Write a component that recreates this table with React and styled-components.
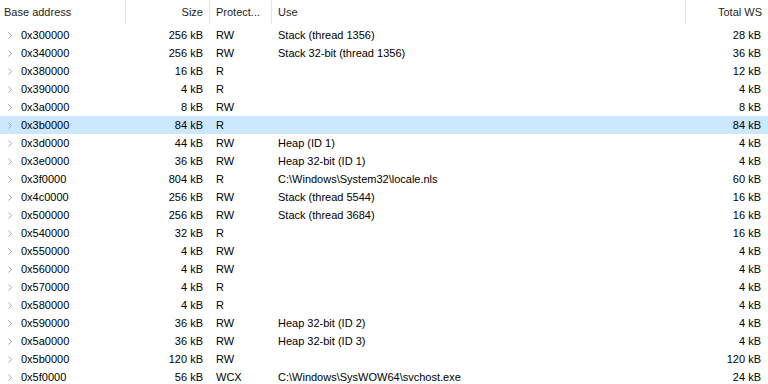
import React from 'react';
import styled, { createGlobalStyle } from 'styled-components';

const GlobalStyle = createGlobalStyle`
  html, body {
    margin: 0;
    padding: 0;
    background: #ffffff;
  }
  body {
    font-family: "Liberation Sans", Arial, sans-serif;
    font-size: 11px;
    color: #000000;
  }
`;

const COLUMNS = '126px 84px 62px 414px 82px';

const Table = styled.div`
  width: 768px;
  height: 384px;
  overflow: hidden;
  background: #ffffff;
`;

const HeaderRow = styled.div`
  display: grid;
  grid-template-columns: ${COLUMNS};
  height: 26px;
  align-items: start;
`;

const HeaderCell = styled.div`
  display: flex;
  align-items: center;
  justify-content: ${props => (props.right ? 'flex-end' : 'flex-start')};
  height: 24px;
  padding: ${props => (props.right ? '0 6px 0 0' : '0 0 0 6px')};
  padding-left: ${props => (props.first ? '4px' : undefined)};
  border-right: ${props => (props.last ? 'none' : '1px solid #e5e5e5')};
  color: #1e1e1e;
  white-space: nowrap;
  overflow: hidden;
`;

const Row = styled.div`
  display: grid;
  grid-template-columns: ${COLUMNS};
  height: 18px;
  align-items: center;
  background: ${props => (props.selected ? '#cce8ff' : 'transparent')};
`;

const Cell = styled.div`
  display: flex;
  align-items: center;
  justify-content: ${props => (props.right ? 'flex-end' : 'flex-start')};
  padding: ${props => (props.right ? '0 7px 0 0' : '0 0 0 6px')};
  white-space: nowrap;
  overflow: hidden;
`;

const AddressCell = styled(Cell)`
  padding-left: 8px;
  gap: 9px;
`;

const Chevron = () => (
  <svg width="4" height="7" viewBox="0 0 4 7">
    <path d="M0.5 0.5 L3.5 3.5 L0.5 6.5" fill="none" stroke="#a6a6a6" strokeWidth="1" />
  </svg>
);

const rows = [
  ['0x300000', '256 kB', 'RW', 'Stack (thread 1356)', '28 kB'],
  ['0x340000', '256 kB', 'RW', 'Stack 32-bit (thread 1356)', '36 kB'],
  ['0x380000', '16 kB', 'R', '', '12 kB'],
  ['0x390000', '4 kB', 'R', '', '4 kB'],
  ['0x3a0000', '8 kB', 'RW', '', '8 kB'],
  ['0x3b0000', '84 kB', 'R', '', '84 kB'],
  ['0x3d0000', '44 kB', 'RW', 'Heap (ID 1)', '4 kB'],
  ['0x3e0000', '36 kB', 'RW', 'Heap 32-bit (ID 1)', '4 kB'],
  ['0x3f0000', '804 kB', 'R', 'C:\\Windows\\System32\\locale.nls', '60 kB'],
  ['0x4c0000', '256 kB', 'RW', 'Stack (thread 5544)', '16 kB'],
  ['0x500000', '256 kB', 'RW', 'Stack (thread 3684)', '16 kB'],
  ['0x540000', '32 kB', 'R', '', '16 kB'],
  ['0x550000', '4 kB', 'RW', '', '4 kB'],
  ['0x560000', '4 kB', 'RW', '', '4 kB'],
  ['0x570000', '4 kB', 'R', '', '4 kB'],
  ['0x580000', '4 kB', 'R', '', '4 kB'],
  ['0x590000', '36 kB', 'RW', 'Heap 32-bit (ID 2)', '4 kB'],
  ['0x5a0000', '36 kB', 'RW', 'Heap 32-bit (ID 3)', '4 kB'],
  ['0x5b0000', '120 kB', 'RW', '', '120 kB'],
  ['0x5f0000', '56 kB', 'WCX', 'C:\\Windows\\SysWOW64\\svchost.exe', '24 kB'],
];

const App = () => (
  <Table>
    <GlobalStyle />
    <HeaderRow>
      <HeaderCell first>Base address</HeaderCell>
      <HeaderCell right>Size</HeaderCell>
      <HeaderCell>Protect...</HeaderCell>
      <HeaderCell>Use</HeaderCell>
      <HeaderCell right last>Total WS</HeaderCell>
    </HeaderRow>
    {rows.map(([addr, size, prot, use, ws]) => (
      <Row key={addr} selected={addr === '0x3b0000'}>
        <AddressCell>
          <Chevron />
          {addr}
        </AddressCell>
        <Cell right>{size}</Cell>
        <Cell>{prot}</Cell>
        <Cell>{use}</Cell>
        <Cell right>{ws}</Cell>
      </Row>
    ))}
  </Table>
);

export default App;
